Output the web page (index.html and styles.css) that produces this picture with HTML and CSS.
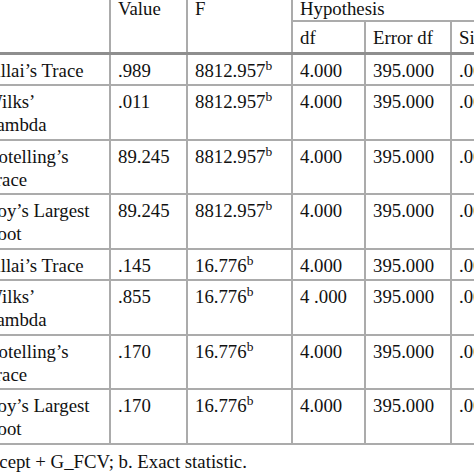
FILE: index.html
```html
<!DOCTYPE html>
<html lang="en">
<head>
<meta charset="utf-8">
<title>Multivariate Tests</title>
<link rel="stylesheet" href="styles.css">
</head>
<body>
<div class="page">
  <table class="mv">
    <colgroup>
      <col class="c-label">
      <col class="c-value">
      <col class="c-f">
      <col class="c-df">
      <col class="c-err">
      <col class="c-sig">
    </colgroup>
    <thead>
      <tr class="h-top">
        <th rowspan="2" class="label h-bottom"></th>
        <th rowspan="2" class="h-bottom">Value</th>
        <th rowspan="2" class="h-bottom">F</th>
        <th colspan="3">Hypothesis</th>
      </tr>
      <tr>
        <th class="h-bottom">df</th>
        <th class="h-bottom">Error df</th>
        <th class="h-bottom">Sig.</th>
      </tr>
    </thead>
    <tbody>
      <tr><td class="label">Pillai’s Trace</td><td>.989</td><td>8812.957<sup>b</sup></td><td>4.000</td><td>395.000</td><td>.000</td></tr>
      <tr><td class="label">Wilks’ Lambda</td><td>.011</td><td>8812.957<sup>b</sup></td><td>4.000</td><td>395.000</td><td>.000</td></tr>
      <tr><td class="label">Hotelling’s Trace</td><td>89.245</td><td>8812.957<sup>b</sup></td><td>4.000</td><td>395.000</td><td>.000</td></tr>
      <tr><td class="label">Roy’s Largest Root</td><td>89.245</td><td>8812.957<sup>b</sup></td><td>4.000</td><td>395.000</td><td>.000</td></tr>
      <tr><td class="label">Pillai’s Trace</td><td>.145</td><td>16.776<sup>b</sup></td><td>4.000</td><td>395.000</td><td>.000</td></tr>
      <tr><td class="label">Wilks’ Lambda</td><td>.855</td><td>16.776<sup>b</sup></td><td>4 .000</td><td>395.000</td><td>.000</td></tr>
      <tr><td class="label">Hotelling’s Trace</td><td>.170</td><td>16.776<sup>b</sup></td><td>4.000</td><td>395.000</td><td>.000</td></tr>
      <tr><td class="label">Roy’s Largest Root</td><td>.170</td><td>16.776<sup>b</sup></td><td>4.000</td><td>395.000</td><td>.000</td></tr>
    </tbody>
  </table>
  <p class="note">a. Design: Intercept + G_FCV; b. Exact statistic.</p>
</div>
</body>
</html>
```

FILE: styles.css
```css
html, body {
  margin: 0;
  padding: 0;
  background: #ffffff;
  overflow: hidden;
}

.page {
  width: 474px;
  height: 474px;
  overflow: hidden;
  font-family: "Liberation Serif", "Times New Roman", serif;
  font-size: 18.8px;
  color: #111111;
}

.mv {
  border-collapse: collapse;
  table-layout: fixed;
  width: 553px;
  margin: -10px 0 0 -22px;
}

.c-label { width: 132px; }
.c-value { width: 77px; }
.c-f { width: 105px; }
.c-df { width: 73px; }
.c-err { width: 86px; }
.c-sig { width: 80px; }

.mv th,
.mv td {
  text-align: left;
  font-weight: normal;
  vertical-align: top;
  line-height: 23px;
  padding: 4px 7px 2.5px;
  border-right: 2px solid #ababab;
  border-bottom: 2px solid #ababab;
  white-space: normal;
}

.mv .h-top th {
  padding-top: 7px;
  padding-bottom: 0;
}

.mv .label {
  border-left: none;
  padding-right: 11px;
}

.mv th.h-bottom {
  border-bottom: 3px solid #8e8e8e;
}

.mv sup {
  font-size: 13.5px;
  line-height: 0;
  vertical-align: 7px;
}

.note {
  margin: 5px 0 0 -117px;
  line-height: 23px;
  white-space: nowrap;
}
```
